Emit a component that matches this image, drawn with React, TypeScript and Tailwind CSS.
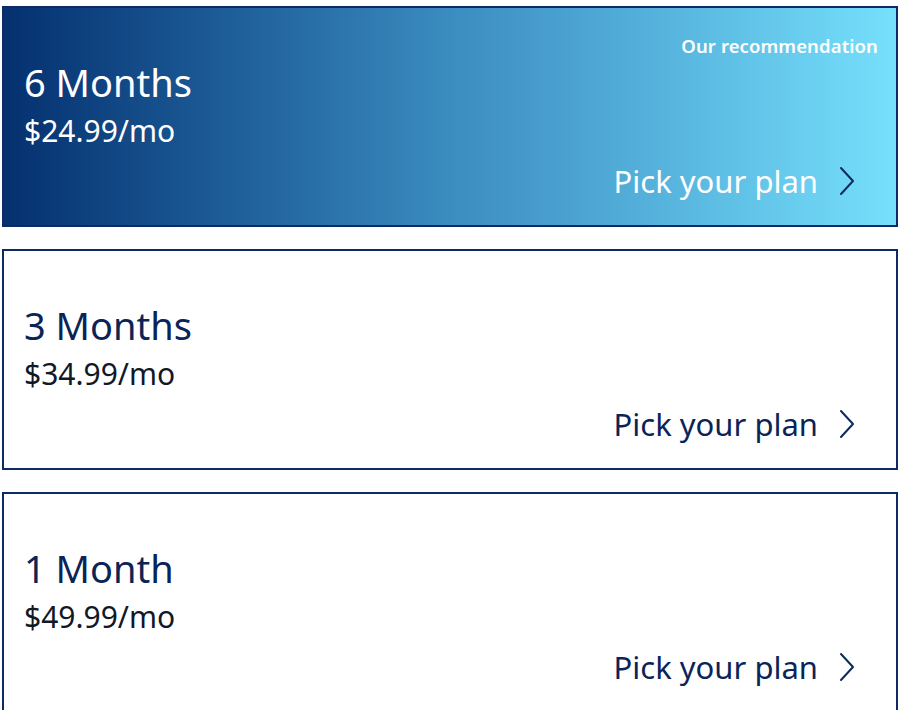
import React from 'react';

interface Plan {
  title: string;
  price: string;
  featured?: boolean;
}

const plans: Plan[] = [
  { title: "6 Months", price: "$24.99/mo", featured: true },
  { title: "3 Months", price: "$34.99/mo" },
  { title: "1 Month", price: "$49.99/mo" },
];

const Chevron = () => (
  <svg width="18" height="30" viewBox="0 0 18 30" fill="none" className="shrink-0">
    <path d="M3 2 L15 15 L3 28" stroke="#0b2a5e" strokeWidth="2" strokeLinecap="round" strokeLinejoin="round" />
  </svg>
);

const PlanCard = ({ plan }: { plan: Plan }) => {
  const featured = plan.featured;
  return (
    <div
      className={
        featured
          ? "relative h-[221px] border-2 border-[#0c2a66] bg-linear-to-r from-[#063070] via-[#3b8cc0] to-[#76e0fc] text-white"
          : "relative h-[221px] border-2 border-[#0c2a66] bg-white"
      }
    >
      {featured && (
        <span className="absolute right-[18px] top-[24px] text-[18.5px] font-semibold tracking-[0.1px] text-white">
          Our recommendation
        </span>
      )}
      <div className="flex h-full flex-col pl-[20px] pr-[40px] pt-[50px]">
        <h3 className={featured ? "text-[38px] leading-[48px] text-white" : "text-[38px] leading-[48px] text-[#0b2457]"}>
          {plan.title}
        </h3>
        <p className={featured ? "mt-[7px] text-[30px] leading-[36px] text-white" : "mt-[7px] text-[30px] leading-[36px] text-[#111827]"}>
          {plan.price}
        </p>
        <div className="mt-[12px] flex items-center justify-end gap-[20px]">
          <span className={featured ? "text-[31px] leading-[40px] text-white" : "text-[31px] leading-[40px] text-[#0b2457]"}>
            Pick your plan
          </span>
          <Chevron />
        </div>
      </div>
    </div>
  );
};

export default function App() {
  return (
    <div className="h-[710px] overflow-hidden bg-white px-[2px] pt-[6px] font-['Noto_Sans',sans-serif]">
      <div className="flex flex-col gap-[22px]">
        {plans.map((plan) => (
          <PlanCard key={plan.title} plan={plan} />
        ))}
      </div>
    </div>
  );
}
